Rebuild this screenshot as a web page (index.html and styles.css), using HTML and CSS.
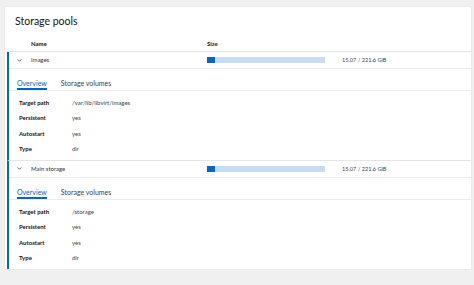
FILE: index.html
```html
<!DOCTYPE html>
<html>
<head>
<meta charset="utf-8">
<link rel="stylesheet" href="styles.css">
</head>
<body>
<div class="card">
  <h1 class="title">Storage pools</h1>
  <div class="thead">
    <span class="c-toggle"></span>
    <span class="c-name">Name</span>
    <span class="c-size">Size</span>
  </div>

  <div class="pool">
    <div class="row">
      <span class="c-toggle"><svg class="chev" viewBox="0 0 6 4" width="5" height="3"><path d="M0.6 0.6 L3 3 L5.4 0.6" fill="none" stroke="#333" stroke-width="1"/></svg></span>
      <span class="c-name">images</span>
      <span class="c-size">
        <span class="bar"><span class="fill" style="width:6.8%"></span></span>
        <span class="size-text">15.07 / 221.6 GiB</span>
      </span>
    </div>
    <div class="detail">
      <div class="tabs">
        <span class="tab active">Overview</span>
        <span class="tab">Storage volumes</span>
      </div>
      <dl class="props">
        <dt>Target path</dt><dd>/var/lib/libvirt/images</dd>
        <dt>Persistent</dt><dd>yes</dd>
        <dt>Autostart</dt><dd>yes</dd>
        <dt>Type</dt><dd>dir</dd>
      </dl>
    </div>
  </div>

  <div class="pool last">
    <div class="row">
      <span class="c-toggle"><svg class="chev" viewBox="0 0 6 4" width="5" height="3"><path d="M0.6 0.6 L3 3 L5.4 0.6" fill="none" stroke="#333" stroke-width="1"/></svg></span>
      <span class="c-name">Main storage</span>
      <span class="c-size">
        <span class="bar"><span class="fill" style="width:6.8%"></span></span>
        <span class="size-text">15.07 / 221.6 GiB</span>
      </span>
    </div>
    <div class="detail">
      <div class="tabs">
        <span class="tab active">Overview</span>
        <span class="tab">Storage volumes</span>
      </div>
      <dl class="props">
        <dt>Target path</dt><dd>/storage</dd>
        <dt>Persistent</dt><dd>yes</dd>
        <dt>Autostart</dt><dd>yes</dd>
        <dt>Type</dt><dd>dir</dd>
      </dl>
    </div>
  </div>
</div>
</body>
</html>
```

FILE: styles.css
```css
html, body {
  margin: 0;
  padding: 0;
  background: #f0f0f0;
}
body {
  font-family: Lato, "Open Sans", sans-serif;
  color: #151515;
  height: 285px;
  overflow: hidden;
}
.card {
  margin: 7px 3px 0 5px;
  background: #fff;
  box-shadow: 0 0 1px rgba(0,0,0,0.12);
}
.title {
  margin: 0;
  padding: 8px 10px 8px;
  font-size: 10.5px;
  line-height: 13px;
  font-weight: 400;
  color: #151515;
}
.thead, .row {
  display: flex;
  align-items: center;
  font-size: 6px;
  line-height: 8px;
}
.thead {
  height: 15px;
  border-bottom: 1px solid #e6e6e6;
  font-weight: 700;
  margin-left: 2px;
  padding-left: 2px;
}
.c-toggle {
  width: 22px;
  padding-left: 8px;
  box-sizing: border-box;
  display: flex;
  align-items: center;
}
.c-name {
  width: 176px;
}
.c-size {
  display: flex;
  align-items: center;
}
.pool {
  margin-left: 2px;
  border-left: 2px solid #0066cc;
  border-bottom: 1px solid #e6e6e6;
}
.pool.last {
  border-bottom: none;
}
.row {
  height: 16px;
  border-bottom: 1px solid #ececec;
}
.row .c-name {
  color: #333;
}
.bar {
  display: block;
  width: 118px;
  height: 6px;
  background: #c6dcf2;
}
.fill {
  display: block;
  height: 100%;
  background: #0066cc;
}
.size-text {
  margin-left: 17px;
  color: #444;
  font-size: 5.6px;
}
.tabs {
  display: flex;
  gap: 14px;
  padding-left: 8px;
  border-bottom: 1px solid #ececec;
  height: 21px;
}
.tab {
  box-sizing: border-box;
  height: 21px;
  padding-top: 10px;
  font-size: 7px;
  line-height: 8px;
  color: #3c3f42;
  border-bottom: 2px solid transparent;
}
.tab.active {
  color: #0066cc;
  border-bottom-color: #0066cc;
}
.props {
  margin: 0;
  padding: 8px 0 7px 10px;
  display: grid;
  grid-template-columns: 53px 1fr;
  row-gap: 7.33px;
  font-size: 6px;
  line-height: 8px;
}
.props dt {
  font-weight: 700;
  color: #151515;
}
.props dd {
  margin: 0;
  color: #444;
}
```
